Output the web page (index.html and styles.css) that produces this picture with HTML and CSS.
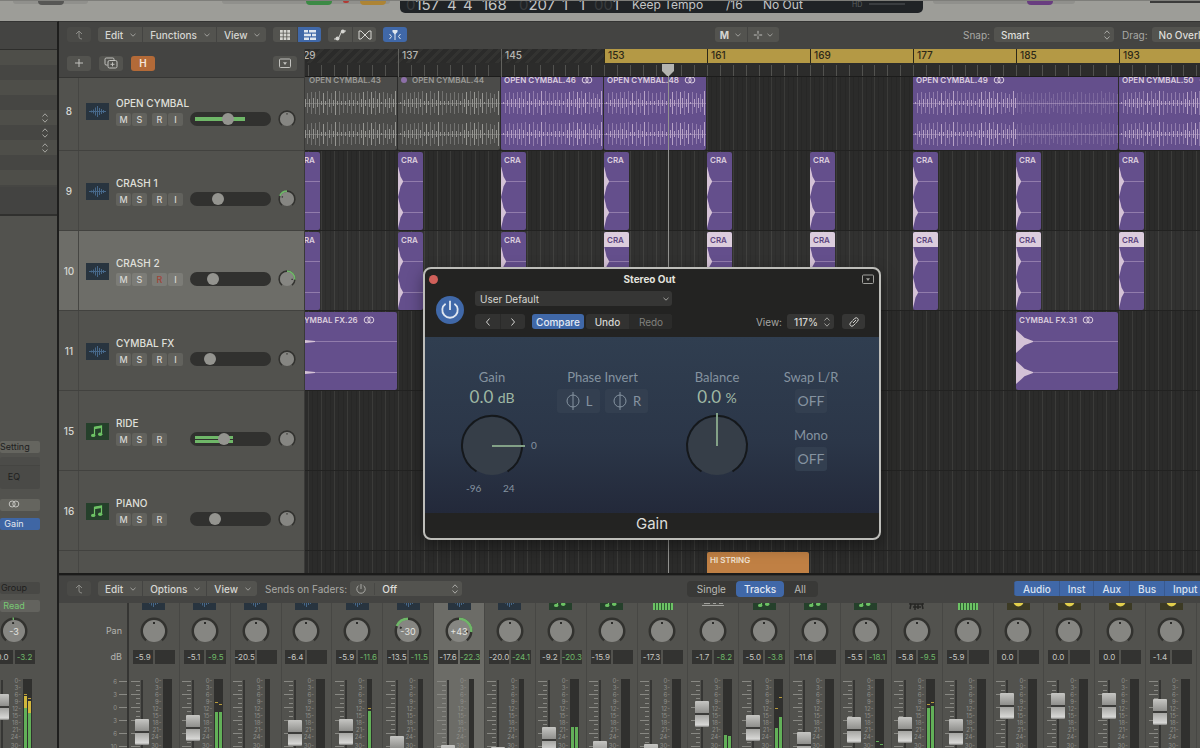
FILE: index.html
```html
<!DOCTYPE html>
<html lang="en">
<head>
    <meta charset="UTF-8">
    <meta name="viewport" content="width=device-width, initial-scale=1.0">
    <title>Tracks</title>
    <link rel="stylesheet" href="styles.css">
</head>
<body>
    <svg class="sprite" aria-hidden="true">
        <symbol id="i-chev" viewBox="0 0 8 8"><path d="M1.5 2.8 4 5.2 6.5 2.8"/></symbol>
        <symbol id="i-updown" viewBox="0 0 8 12"><path d="M1.5 4.5 4 1.8 6.5 4.5M1.5 7.5 4 10.2 6.5 7.5"/></symbol>
        <symbol id="i-up" viewBox="0 0 12 12"><path d="M3 5 6 2 9 5M6 2v6q0 2 3 2"/></symbol>
        <symbol id="i-plus" viewBox="0 0 12 12"><path d="M6 2v8M2 6h8"/></symbol>
        <symbol id="i-dup" viewBox="0 0 14 12"><path d="M3.5 8H2.2Q1 8 1 6.8V2.2Q1 1 2.2 1h6.6Q10 1 10 2.2V3"/><rect x="4" y="3.5" width="9" height="7.5" rx="1.5"/><path d="M8.5 5.3v4M6.5 7.3h4"/></symbol>
        <symbol id="i-box" viewBox="0 0 14 12"><rect x="1.5" y="2" width="11" height="8.5" rx="1"/><path class="fill" d="M5 5.2h4L7 8z"/></symbol>
        <symbol id="i-grid" viewBox="0 0 12 12"><path class="fill" d="M1 1h2.8v2.8H1zM4.6 1h2.8v2.8H4.6zM8.2 1H11v2.8H8.2zM1 4.6h2.8v2.8H1zM4.6 4.6h2.8v2.8H4.6zM8.2 4.6H11v2.8H8.2zM1 8.2h2.8V11H1zM4.6 8.2h2.8V11H4.6zM8.2 8.2H11V11H8.2z"/></symbol>
        <symbol id="i-regions" viewBox="0 0 12 12"><path class="fill" d="M0 1h4v2.6H0zM5 1h7v2.6H5zM0 4.7h7v2.6H0zM8 4.7h4v2.6H8zM0 8.4h5V11H0zM6 8.4h6V11H6z"/></symbol>
        <symbol id="i-auto" viewBox="0 0 14 12"><path d="M1 10h2.5Q6 10 7 6t3.500-4H13"/><circle class="fill" cx="4.500" cy="9.500" r="2"/><circle class="fill" cx="9.800" cy="2.500" r="2"/></symbol>
        <symbol id="i-flex" viewBox="0 0 14 12"><path d="M1 2v8h2L11 2h2v8h-2L3 2z"/></symbol>
        <symbol id="i-catch" viewBox="0 0 14 12"><path d="M7 4v7M1.500 5 3.500 7.500 1.500 10M12.500 5 10.500 7.500 12.500 10"/><path class="fill" d="M4.500 1h5v2L7 5.500 4.500 3z"/></symbol>
        <symbol id="i-cross" viewBox="0 0 12 12"><path d="M6 1v3.500M6 7.500V11M1 6h3.500M7.500 6H11M6 5.500v1"/></symbol>
        <symbol id="i-power" viewBox="0 0 12 12"><path d="M6 1v5M3.600 2.600a4.200 4.200 0 1 0 4.800 0"/></symbol>
        <symbol id="i-left" viewBox="0 0 8 10"><path d="M5.500 1.500 2.500 5l3 3.500"/></symbol>
        <symbol id="i-right" viewBox="0 0 8 10"><path d="M2.500 1.500 5.500 5l-3 3.500"/></symbol>
        <symbol id="i-link" viewBox="0 0 12 12"><path d="m5 7 3-3M4.500 4.800 2.300 7a2 2 0 0 0 2.800 2.800l2.200-2.200M4.800 4.400 7 2.200a2 2 0 0 1 2.800 2.800L7.600 7.200"/></symbol>
        <symbol id="i-phase" viewBox="0 0 16 18"><circle cx="8" cy="9" r="6"/><path d="M8 0v18"/></symbol>
        <symbol id="i-stereo" viewBox="0 0 12 8"><circle cx="4.200" cy="4" r="3"/><circle cx="7.800" cy="4" r="3"/></symbol>
        <symbol id="i-audio" viewBox="0 0 23 17"><rect class="bg-audio" width="23" height="17"/><path class="wave" d="M3 8.500h17M5.500 7.500v2M7.500 6.500v4M9.500 4.500v8M11.500 3v11M13.500 5v7M15.500 6v5M17.500 7v3"/></symbol>
        <symbol id="i-midi" viewBox="0 0 23 17"><rect class="bg-midi" width="23" height="17"/><path class="note" d="M8.500 12V4.200l7-1.200v7.800"/><path class="note-fill" d="M8.500 4 15.500 2.800V5L8.500 6.200z"/><ellipse class="note-fill" cx="7.200" cy="12.400" rx="2.200" ry="1.700"/><ellipse class="note-fill" cx="14.200" cy="11.200" rx="2.200" ry="1.700"/></symbol>
        <symbol id="i-keys" viewBox="0 0 23 17"><rect class="note-fill" x="2" y="8" width="20" height="9"/><path class="key-gap" d="M4.500 8v9M7.500 8v9M10.500 8v9M13.500 8v9M16.500 8v9M19.500 8v9"/></symbol>
        <symbol id="i-drum" viewBox="0 0 23 17"><path class="kit" d="M5 8h13v3H5zM6 11l-1 5M10 11v6M13 11v5M17 11l1 5M8 14h8"/></symbol>
        <symbol id="i-synth" viewBox="0 0 23 17"><path class="synth" d="M0 12.500h22M2 10.500h6M11 10.500h3M17 10.500h4"/></symbol>
        <symbol id="i-aux" viewBox="0 0 23 17"><rect class="bg-aux" width="23" height="17"/><circle class="sun" cx="11.500" cy="8.500" r="5"/></symbol>
    </svg>

    <header class="control-bar">
        <div class="bar-group transport"><i class="chip gray"></i></div>
        <div class="bar-group modes"><i class="chip green"></i><i class="dot red"></i><i class="chip gold"></i></div>
        <div class="lcd">
            <span><i>0</i>157</span><span>4</span><span>4</span><span>168</span>
            <span><i>0</i>207</span><span>1</span><span>1</span><span><i>00</i>1</span>
            <span class="small">Keep Tempo</span><span class="small">/16</span><span class="small">No Out</span>
            <span class="tiny">HD</span><span class="lcd-meter"></span>
        </div>
        <div class="bar-group tools"><i class="chip purple"></i></div>
        <div class="bar-edge"></div>
    </header>

    <div class="workspace">
        <aside class="inspector">
            <div class="inspector-head"></div>
            <div class="params">
                <svg><use href="#i-updown"/></svg>
                <svg><use href="#i-updown"/></svg>
                <svg><use href="#i-updown"/></svg>
            </div>
            <div class="inspector-gap"></div>
            <div class="slots">
                <button class="slot">Setting</button>
                <button class="slot eq">EQ</button>
                <button class="slot" aria-label="Stereo"><svg><use href="#i-stereo"/></svg></button>
                <button class="slot active">Gain</button>
                <button class="slot group">Group</button>
                <button class="slot read">Read</button>
            </div>
            <div class="inspector-strip" id="masterStrip"></div>
        </aside>

        <main class="editor">
            <nav class="toolbar">
                <button class="btn dim" aria-label="Up"><svg><use href="#i-up"/></svg></button>
                <div class="seg menus">
                    <button>Edit<svg><use href="#i-chev"/></svg></button>
                    <button>Functions<svg><use href="#i-chev"/></svg></button>
                    <button>View<svg><use href="#i-chev"/></svg></button>
                </div>
                <div class="seg icons">
                    <button aria-label="Grid"><svg><use href="#i-grid"/></svg></button>
                    <button class="on" aria-label="Regions"><svg><use href="#i-regions"/></svg></button>
                </div>
                <div class="seg icons">
                    <button aria-label="Automation"><svg><use href="#i-auto"/></svg></button>
                    <button aria-label="Flex"><svg><use href="#i-flex"/></svg></button>
                </div>
                <button class="btn on" aria-label="Catch playhead"><svg><use href="#i-catch"/></svg></button>
                <div class="space-wide"></div>
                <div class="seg tool-menus">
                    <button><b>M</b><svg><use href="#i-chev"/></svg></button>
                    <button aria-label="Marquee tool"><svg><use href="#i-cross"/></svg><svg><use href="#i-chev"/></svg></button>
                </div>
                <div class="space"></div>
                <div class="snap">
                    <label for="snap">Snap:</label>
                    <span class="picker"><select id="snap"><option>Smart</option></select><svg><use href="#i-updown"/></svg></span>
                    <label for="drag">Drag:</label>
                    <span class="picker"><select id="drag"><option>No Overlap</option></select></span>
                </div>
            </nav>

            <section class="arrange">
                <div class="headers">
                    <div class="head-tools">
                        <button class="btn" aria-label="Add track"><svg><use href="#i-plus"/></svg></button>
                        <button class="btn" aria-label="Duplicate track"><svg><use href="#i-dup"/></svg></button>
                        <button class="btn hide">H</button>
                        <button class="btn last" aria-label="Track options"><svg><use href="#i-box"/></svg></button>
                    </div>
                    <div class="track-list" id="trackList"></div>
                </div>
                <div class="timeline" id="timeline">
                    <div class="ruler" id="ruler"></div>
                    <div class="lanes" id="lanes"></div>
                    <svg class="playhead" id="playhead"><path class="line" d="M6.500 8v600"/><path class="head" d="M0 0h12v7l-5 5H5L0 7z"/></svg>
                </div>
            </section>

            <section class="mixer">
                <nav class="toolbar">
                    <button class="btn dim" aria-label="Up"><svg><use href="#i-up"/></svg></button>
                    <div class="seg menus">
                        <button>Edit<svg><use href="#i-chev"/></svg></button>
                        <button>Options<svg><use href="#i-chev"/></svg></button>
                        <button>View<svg><use href="#i-chev"/></svg></button>
                    </div>
                    <label for="sends">Sends on Faders:</label>
                    <span class="picker sends"><button aria-label="Sends on"><svg><use href="#i-power"/></svg></button><select id="sends"><option>Off</option></select><svg><use href="#i-updown"/></svg></span>
                    <div class="space-before"></div>
                    <div class="filter">
                        <button>Single</button><button class="on">Tracks</button><button>All</button>
                    </div>
                    <div class="space-after"></div>
                    <div class="types">
                        <button>Audio</button><button>Inst</button><button>Aux</button><button>Bus</button><button>Input</button>
                    </div>
                </nav>
                <div class="console">
                    <div class="console-labels">
                        <span class="pan-label">Pan</span>
                        <span class="db-label">dB</span>
                        <ul class="db-scale" id="dbScale"></ul>
                    </div>
                    <div class="strips" id="strips"></div>
                </div>
            </section>
        </main>
    </div>

    <div class="plugin" role="dialog" aria-label="Stereo Out">
        <div class="plugin-title">
            <button class="close" aria-label="Close"></button>
            <h2>Stereo Out</h2>
            <svg><use href="#i-box"/></svg>
        </div>
        <div class="plugin-bar">
            <button class="power" aria-label="Bypass"><svg><use href="#i-power"/></svg></button>
            <div class="plugin-rows">
                <span class="preset"><select aria-label="Preset"><option>User Default</option></select><svg><use href="#i-chev"/></svg></span>
                <div class="plugin-row">
                    <div class="seg pager">
                        <button aria-label="Previous"><svg><use href="#i-left"/></svg></button>
                        <button aria-label="Next"><svg><use href="#i-right"/></svg></button>
                    </div>
                    <button class="pbtn on">Compare</button>
                    <div class="seg undo"><button>Undo</button><button disabled>Redo</button></div>
                    <div class="space"></div>
                    <label for="zoom">View:</label>
                    <span class="zoom"><select id="zoom"><option>117%</option></select><svg><use href="#i-updown"/></svg></span>
                    <button class="pbtn link" aria-label="Link"><svg><use href="#i-link"/></svg></button>
                </div>
            </div>
        </div>
        <div class="face">
            <div class="param">
                <label for="gain">Gain</label>
                <output>0.0 <small>dB</small></output>
                <div class="dial">
                    <svg viewBox="0 0 92 88">
                        <circle class="dial-cap" cx="46" cy="38" r="29"/>
                        <path class="dial-ring" d="M30.500 63.500a30 30 0 1 1 31 0"/>
                        <path class="dial-hand" d="M46 38h33"/>
                        <text x="85" y="41">0</text><text x="20" y="84">-96</text><text x="57" y="84">24</text>
                    </svg>
                    <input id="gain" type="range" min="-96" max="24" value="0">
                </div>
            </div>
            <div class="param">
                <span>Phase Invert</span>
                <div class="phase">
                    <button><svg><use href="#i-phase"/></svg>L</button>
                    <button><svg><use href="#i-phase"/></svg>R</button>
                </div>
            </div>
            <div class="param">
                <label for="balance">Balance</label>
                <output>0.0 <small>%</small></output>
                <div class="dial">
                    <svg viewBox="0 0 92 88">
                        <circle class="dial-cap" cx="46" cy="38" r="29"/>
                        <path class="dial-ring" d="M30.500 63.500a30 30 0 1 1 31 0"/>
                        <path class="dial-hand" d="M46 38V5"/>
                    </svg>
                    <input id="balance" type="range" min="-100" max="100" value="0">
                </div>
            </div>
            <div class="param">
                <span>Swap L/R</span>
                <button class="toggle">OFF</button>
                <span class="mono">Mono</span>
                <button class="toggle">OFF</button>
            </div>
        </div>
        <div class="plugin-foot">Gain</div>
    </div>

    <script src="app.js"></script>
</body>
</html>
```
FILE: styles.css
```css
* {
    box-sizing: border-box;
}

body {
    margin: 0;
    height: 100vh;
    display: flex;
    flex-direction: column;
    overflow: hidden;
    background: #2b2b2a;
    color: #d6d6d2;
    font-family: Inter, 'Liberation Sans', sans-serif;
    font-size: 10px;
}

button, select, input {
    margin: 0;
    padding: 0;
    border: 0;
    font: inherit;
    color: inherit;
    background: none;
    appearance: none;
}

svg {
    fill: none;
    stroke: currentColor;
    stroke-width: 1;
    flex: none;
}

.fill {
    fill: currentColor;
    stroke: none;
}

.sprite {
    position: absolute;
    width: 0;
    height: 0;
}

/* control bar */
.control-bar {
    flex: none;
    display: flex;
    align-items: flex-start;
    height: 21px;
    background: #9d9d98;
    border-top: 1px solid #7e7e7a;
    overflow: hidden;
}

.bar-group {
    display: flex;
    height: 3px;
    background: #90908c;
    border-radius: 0 0 5px 5px;
}

.transport {
    margin-left: 13px;
    width: 75px;
    padding-left: 25px;
}

.modes {
    width: 168px;
    margin-left: 134px;
    padding-left: 84px;
    gap: 11px;
}

.chip {
    width: 26px;
    height: 4px;
    border-radius: 0 0 5px 5px;
}

.gray { background: #575755; }
.green { background: #3c8a45; }
.gold { background: #ad8435; }
.purple { background: #693d80; }

.dot {
    width: 6px;
    height: 2px;
    border-radius: 0 0 3px 3px;
}

.red { background: #b13a35; }

.lcd {
    margin-left: 10px;
    flex: 0 0 523px;
    height: 12px;
    padding-left: 6px;
    background: #202326;
    border-radius: 0 0 5px 5px;
    display: grid;
    grid-template-columns: 41px 16px 19px 37px 43px 17px 15px 38px 94px 37px 89px 17px 36px;
    line-height: 7px;
    align-items: start;
    font-size: 15px;
    color: #c4c6c6;
    white-space: nowrap;
}

.lcd i {
    font-style: normal;
    color: #393c3e;
}

.lcd .small {
    font-size: 12px;
}

.lcd .tiny {
    font-size: 7px;
    color: #5d6062;
}

.lcd .lcd-meter {
    height: 2px;
    margin-top: 2px;
    background: #3a3d40;
}

.tools {
    margin-left: 10px;
    width: 142px;
    padding-left: 94px;
}

.bar-edge {
    margin-left: auto;
    width: 50px;
    height: 2px;
    background: #3c3c3b;
}

/* inspector */
.workspace {
    flex: 1;
    min-height: 0;
    display: flex;
}

.inspector {
    flex: none;
    width: 59px;
    border-right: 2px solid #1e1e1d;
    border-top: 1px solid #343433;
    background: #52524e;
    overflow: hidden;
    display: flex;
    flex-direction: column;
}

.inspector-head {
    height: 28px;
    background: #444442;
    border-bottom: 1px solid #2e2e2c;
}

.params {
    height: 137px;
    padding: 62px 7px 0 0;
    display: flex;
    flex-direction: column;
    align-items: flex-end;
    gap: 3px;
    background: repeating-linear-gradient(#4e4e49 0 15px, #464643 15px 30px);
}

.params svg {
    width: 10px;
    height: 12px;
    color: #a5a5a0;
}

.inspector-gap {
    height: 29px;
    background: #434341;
    border-bottom: 2px solid #30302e;
}

.slots {
    flex: 1;
    padding-right: 17px;
    display: flex;
    flex-direction: column;
    justify-content: flex-end;
}

.slot {
    height: 12px;
    border-radius: 2px;
    background: #65655f;
    color: #20201e;
    font-size: 9px;
    line-height: 12px;
    text-align: center;
    padding-right: 12px;
}

.slot svg {
    width: 12px;
    height: 8px;
    color: #c4c4c0;
}

.slot.eq {
    height: 32px;
    padding-top: 8px;
    margin: 4px 0 10px;
    background: linear-gradient(#4c4c49 8px, #454542 8px 9px, #4a4a47 9px);
}

.slot.active {
    margin: 7px 0 52px;
    background: #3f66a4;
    color: #e4e8ee;
}

.slot.group {
    background: #484845;
    margin-bottom: 6px;
}

.slot.read {
    background: #63635e;
    color: #78c874;
}

.inspector-strip {
    width: 51px;
    height: 136px;
    margin-left: -12px;
}

/* toolbars */
.editor {
    flex: 1;
    min-width: 0;
    display: flex;
    flex-direction: column;
}

.toolbar {
    flex: none;
    display: flex;
    align-items: center;
    height: 28px;
    padding: 0 0 2px 8px;
    background: #444442;
    border-top: 1px solid #343433;
    overflow: hidden;
    white-space: nowrap;
}

.toolbar label {
    color: #a9a9a5;
}

.space { flex: 3; }
.space-wide { flex: 5; }
.space-before { flex: 9; }
.space-after { flex: 8; }

.btn, .seg {
    height: 15px;
    border-radius: 3px;
    background: #53534f;
}

.btn {
    width: 24px;
    display: flex;
    align-items: center;
    justify-content: center;
    color: #c2c2be;
}

.btn svg, .icons svg {
    width: 14px;
    height: 12px;
}

.btn.dim {
    background: #4a4a47;
    color: #8b8b87;
}

.btn.on, .seg .on {
    background: #4068a8;
    color: #dfe6f0;
}

.seg {
    display: flex;
    overflow: hidden;
}

.seg button {
    display: flex;
    align-items: center;
    justify-content: space-between;
    border-left: 1px solid #444442;
}

.seg button:first-child {
    border-left: 0;
}

.menus {
    margin-left: 7px;
}

.menus button {
    padding: 0 5px 0 7px;
    gap: 6px;
    font-weight: 500;
}

.menus svg, .tool-menus svg:last-child {
    width: 8px;
    height: 8px;
    color: #a0a09c;
}

.icons {
    margin-left: 7px;
}

.icons button {
    width: 24px;
    justify-content: center;
    color: #d6d6d2;
}

.toolbar > .btn.on {
    margin-left: 7px;
}

.tool-menus button {
    width: 32px;
    padding: 0 5px;
}

.tool-menus svg:first-child {
    width: 10px;
    height: 10px;
}

.snap {
    flex: 0 0 237px;
    display: flex;
    align-items: center;
    gap: 4px;
    overflow: hidden;
}

.picker {
    flex: none;
    width: 120px;
    height: 15px;
    margin-right: 4px;
    padding: 0 3px 0 7px;
    display: flex;
    align-items: center;
    border-radius: 3px;
    background: #53534f;
}

.picker select {
    flex: 1;
    color: #dededa;
    font-weight: 500;
}

.picker svg {
    width: 8px;
    height: 12px;
    color: #aaaaa6;
}

.sends {
    width: 112px;
    padding-left: 5px;
}

.sends button {
    display: flex;
    padding-right: 7px;
    border-right: 1px solid #484845;
    margin-right: 7px;
}

.sends button svg {
    width: 12px;
}

.mixer .toolbar > label {
    margin: 0 3px 0 8px;
}

/* arrange area */
.arrange {
    flex: 1;
    min-height: 0;
    display: flex;
    overflow: hidden;
}

.headers {
    flex: none;
    width: 246px;
    display: flex;
    flex-direction: column;
    background: #52524e;
    border-right: 1px solid #3a3a38;
}

.head-tools {
    flex: none;
    height: 29px;
    padding: 0 7px 0 8px;
    display: flex;
    align-items: center;
    gap: 8px;
    background: #444442;
    border-bottom: 1px solid #363634;
}

.btn.hide {
    background: #b36a38;
    color: #f4e6da;
    font-weight: 600;
}

.btn.last {
    margin-left: auto;
}

.track-list, .lanes {
    flex: 1;
    min-height: 0;
    display: flex;
    flex-direction: column;
    justify-content: flex-start;
    overflow: hidden;
}

/* first row is scrolled a little under the ruler */
.track-list > :first-child {
    margin-top: -7px;
}

.track {
    flex: none;
    height: 80px;
    padding: 24px 8px 0 0;
    display: grid;
    grid-template: 16px 16px / 20px 23px 67px 1fr 18px;
    column-gap: 7px;
    align-items: center;
    border-bottom: 1px solid #42423f;
    background: linear-gradient(90deg, transparent 19px, #464643 19px 20px, transparent 20px);
}

.track.selected {
    background-color: #6d6d68;
}

.track-number {
    grid-row: 1 / 3;
    text-align: center;
    font-weight: 500;
}

.track > svg {
    grid-row: 1 / 3;
    width: 23px;
    height: 17px;
}

.track-name {
    grid-column: 3 / 6;
    color: #e0e0dc;
    font-weight: 500;
}

.track-buttons {
    grid-column: 3;
    display: flex;
    gap: 1px;
}

.track-buttons button {
    width: 15px;
    height: 13px;
    border-radius: 2px;
    background: #62625d;
    font-size: 9px;
    font-weight: 500;
    line-height: 13px;
}

.track.selected .track-buttons button {
    background: #7c7c77;
}

.track-buttons button:nth-child(3) {
    margin-left: 4px;
}

.track.selected .track-buttons .armed {
    color: #a04438;
}

.volume {
    display: grid;
    height: 14px;
    border-radius: 7px;
    background: #31312f;
    align-items: center;
}

.volume > * {
    grid-area: 1 / 1;
}

.level {
    height: 4px;
    margin-left: 5px;
    background: #6fb768;
}

.level.split {
    height: 7px;
    background: linear-gradient(#6fb768 3px, #31312f 3px 4px, #6fb768 4px);
}

.volume input {
    width: 100%;
    height: 14px;
}

.volume input::-webkit-slider-thumb {
    appearance: none;
    width: 12px;
    height: 12px;
    border-radius: 50%;
    background: #94948f;
}

.bg-audio { fill: #28343f; stroke: none; }
.bg-midi { fill: #25402b; stroke: none; }
.bg-aux { fill: #3c3a24; stroke: none; }
.wave { stroke: #47688a; }
.note { stroke: #72c868; stroke-width: 1.2; }
.note-fill { fill: #6cc264; stroke: none; }
.key-gap { stroke: #2f5c33; }
.kit { stroke: #262624; stroke-width: 1.5; }
.synth { stroke: #a0a09c; }
.sun { fill: #e2cf4c; stroke: none; }

/* timeline */
.timeline {
    flex: 1;
    min-width: 0;
    display: flex;
    flex-direction: column;
    position: relative;
    overflow: hidden;
    background: #2b2b2a;
}

.ruler {
    flex: none;
    height: 28px;
    position: relative;
    background: repeating-linear-gradient(135deg, #2b2b2a 0 4px, #333331 4px 7px);
    border-bottom: 1px solid #1c1c1b;
}

.ruler svg {
    position: absolute;
    inset: 14px 0 0;
    width: 100%;
    height: 13px;
    background: #2c2c2b;
    stroke: #52524f;
}

.cycle {
    position: absolute;
    top: 0;
    right: 0;
    height: 14px;
    background: #b49945;
}

.bar-number {
    position: absolute;
    top: 0;
    height: 28px;
    padding-left: 3px;
    border-left: 1px solid #62625e;
    line-height: 12px;
    color: #b6b6b2;
    font-weight: 500;
}

.bar-number.in-cycle {
    height: 14px;
    border-color: #2c2818;
    color: #2c2818;
}

.lanes {
    position: relative;
}

.lane-grid {
    position: absolute;
    inset: 0;
    width: 100%;
    height: 100%;
}

.lane-grid .beat { stroke: #272726; }
.lane-grid .bar { stroke: #3b3b39; }

.lane {
    flex: none;
    height: 80px;
    position: relative;
    border-bottom: 1px solid #222221;
}

.lane.first {
    margin-top: -6px;
}

.lane.selected {
    background: rgba(255, 255, 255, 0.03);
}

.region {
    position: absolute;
    top: 1px;
    bottom: 0;
    border-radius: 2px;
    background: #644f8c;
    overflow: hidden;
    color: #dccede;
}

.region h3 {
    margin: 0;
    height: 15px;
    padding-left: 3px;
    display: flex;
    align-items: center;
    gap: 5px;
    font-size: 8px;
    font-weight: 600;
    white-space: nowrap;
}

.region h3 svg {
    width: 12px;
    height: 8px;
}

.region .tag {
    width: 6px;
    height: 6px;
    border-radius: 50%;
    background: #8c6fa8;
}

.region .waves {
    display: block;
    height: 64px;
    stroke: #b7a2c6;
}

.region .waves .decay {
    fill: #d4c2d6;
    stroke: none;
}

.region .waves .soft {
    opacity: 0.55;
}

.region .waves .looped {
    opacity: 0.3;
}

.region.muted {
    background: #4b4b49;
    color: #9a9a96;
    font-weight: 500;
}

.region.muted .waves {
    stroke: #969692;
}

.region.picked h3 {
    background: #dccddd;
    color: #5c467f;
}

.region.orange {
    background: #c08044;
    color: #efe0d0;
}

.playhead {
    position: absolute;
    top: 15px;
    left: 357px;
    width: 12px;
    height: 100%;
}

.playhead .line { stroke: #92928f; }
.playhead .head { fill: #b4b4b0; stroke: none; }

/* mixer */
.mixer {
    flex: none;
    height: 175px;
    display: flex;
    flex-direction: column;
    border-top: 2px solid #1b1b1a;
    background: #52524e;
    overflow: hidden;
}

.filter {
    display: flex;
    border-radius: 4px;
    background: #393937;
}

.filter button {
    height: 16px;
    padding: 0 10px;
    border-radius: 4px;
    color: #b9b9b5;
}

.filter button:last-child {
    padding-right: 12px;
}

.filter .on {
    padding: 0 8px;
    background: #4068a8;
    color: #e4eaf4;
    font-weight: 500;
}

.types {
    flex: 0 0 186px;
    display: flex;
    overflow: hidden;
    border-radius: 3px 0 0 3px;
    background: #4068a8;
}

.types button {
    height: 15px;
    padding: 0 8px;
    border-left: 1px solid #38598f;
    color: #dbe3f0;
    font-weight: 500;
}

.console {
    flex: 1;
    min-height: 0;
    display: flex;
    overflow: hidden;
}

.console-labels {
    flex: none;
    width: 70px;
    border-right: 2px solid #353533;
    display: flex;
    flex-direction: column;
    text-align: right;
    font-size: 9px;
    color: #b4b4b0;
}

.console-labels span {
    padding-right: 5px;
    line-height: 12px;
}

.pan-label { margin-top: 22px; }
.db-label { margin-top: 14px; }

.db-scale {
    margin: 12px 0 0;
    padding: 0;
    list-style: none;
    font-size: 6px;
    color: #94948f;
}

.db-scale li {
    height: 13px;
    display: flex;
    align-items: center;
    justify-content: flex-end;
    gap: 2px;
}

.db-scale li::after {
    content: '';
    width: 8px;
    height: 1px;
    background: #8a8a85;
}

.strips {
    flex: 1;
    min-width: 0;
    padding-right: 3px;
    display: grid;
    grid-template-columns: repeat(21, minmax(0, 1fr));
}

.strip {
    height: 100%;
    border-right: 1px solid #474744;
    overflow: hidden;
    display: flex;
    flex-direction: column;
    align-items: center;
}

.strip > * {
    flex: none;
}

.strip.selected {
    background: #6c6c67;
}

.strip-icon {
    height: 7px;
    overflow: hidden;
    display: flex;
    align-items: flex-end;
}

.strip-icon svg {
    width: 23px;
    height: 17px;
}

.inspector-strip .strip {
    border: 0;
}

.inspector-strip .strip-icon {
    height: 0;
}

.inspector-strip .knob {
    margin-top: 5px;
}

.knob {
    position: relative;
    display: block;
    width: 28px;
    height: 28px;
    margin-top: 7px;
}

.track .knob {
    width: 18px;
    height: 18px;
    margin: 0;
}

.knob svg {
    display: block;
    width: 100%;
    height: 100%;
}

.knob input, .dial input {
    position: absolute;
    inset: 0;
    width: 100%;
    height: 100%;
    opacity: 0;
}

.knob .ring { stroke: #32322f; stroke-width: 3; }
.knob .arc { stroke: #6fb768; stroke-width: 3; }
.knob .cap { fill: #868682; stroke: none; }
.knob .mark { stroke: #2c2c2a; stroke-width: 2; }
.knob text { fill: #e4e4e0; stroke: none; font-size: 9px; text-anchor: middle; }

.readouts {
    display: flex;
    gap: 2px;
    margin-top: 5px;
}

.readouts span {
    width: 20px;
    height: 14px;
    background: #333331;
    font-size: 8px;
    line-height: 14px;
    text-align: center;
    color: #c6c6c2;
    white-space: nowrap;
}

.readouts .peak {
    color: #6fb768;
}

.fader-area {
    display: flex;
    align-items: flex-start;
    margin-top: 13px;
    width: 45px;
}

.fader {
    display: grid;
    width: 18px;
}

.fader > * {
    grid-area: 1 / 1;
}

.fader svg {
    width: 12px;
    height: 126px;
    stroke: #888883;
}

.fader .slot-line {
    stroke: #363634;
    stroke-width: 2;
}

.fader input {
    writing-mode: vertical-lr;
    direction: rtl;
    justify-self: end;
    width: 14px;
    height: 126px;
}

.fader input::-webkit-slider-thumb {
    appearance: none;
    width: 14px;
    height: 26px;
    border-radius: 1px;
    background: linear-gradient(#c6c6c3, #8f8f8c 12px, #3c3c3a 12px 14px, #a5a5a2 14px, #d8d8d6 24px, #80807d);
}

.meter-scale {
    width: 12px;
    margin: 0;
    padding: 0;
    list-style: none;
    font-size: 6px;
    line-height: 7px;
    text-align: right;
    color: #8e8e89;
}

.meter-scale li:last-child {
    margin-top: 2px;
}

.meter {
    width: 9px;
    height: 90px;
    margin: 2px 0 0 2px;
    padding: 0 1px;
    display: flex;
    justify-content: space-between;
    background: #30302e;
}

.meter.single {
    width: 5px;
}

.meter svg {
    width: 3px;
    height: 90px;
    stroke: none;
}

/* plug-in window */
.plugin {
    position: absolute;
    top: 267px;
    left: 423px;
    width: 458px;
    border: 2px solid #bdbdb9;
    border-radius: 8px;
    background: #232322;
    overflow: hidden;
    box-shadow: 0 6px 16px rgba(0, 0, 0, 0.4);
}

.plugin-title {
    display: flex;
    align-items: center;
    height: 20px;
    padding: 0 4px;
}

.plugin-title h2 {
    flex: 1;
    margin: 0;
    text-align: center;
    font-size: 10px;
    font-weight: 700;
    color: #e2e2de;
}

.plugin-title svg {
    width: 14px;
    height: 12px;
    color: #a0a09c;
}

.close {
    width: 9px;
    height: 9px;
    border-radius: 50%;
    background: #d0605a;
}

.plugin-bar {
    display: flex;
    gap: 11px;
    height: 48px;
    padding: 0 14px 0 11px;
}

.power {
    width: 28px;
    height: 28px;
    margin-top: 7px;
    border-radius: 50%;
    background: #4068a8;
    color: #dfe6f0;
    display: grid;
    place-items: center;
}

.power svg {
    width: 22px;
    height: 22px;
}

.plugin-rows {
    flex: 1;
    padding-top: 2px;
}

.preset {
    display: flex;
    align-items: center;
    width: 197px;
    height: 15px;
    padding: 0 2px 0 5px;
    border-radius: 3px;
    background: #363635;
}

.preset select {
    flex: 1;
}

.preset svg {
    width: 8px;
    height: 8px;
    color: #a0a09c;
}

.plugin-row {
    display: flex;
    align-items: center;
    margin-top: 8px;
}

.plugin-row label {
    margin-right: 5px;
    color: #a6a6a2;
}

.pager, .undo {
    background: #323231;
}

.plugin-row .seg button {
    border-color: #2a2a29;
    justify-content: center;
}

.pager button {
    width: 25px;
}

.pager svg {
    width: 8px;
    height: 10px;
}

.undo button {
    width: 43px;
    font-weight: 500;
}

.undo button:disabled {
    background: #2b2b2a;
    color: #80807c;
    font-weight: 400;
}

.pbtn {
    height: 15px;
    border-radius: 3px;
    background: #363635;
}

.pbtn.on {
    width: 52px;
    margin: 0 2px 0 7px;
    background: #4068a8;
    color: #e4eaf4;
    font-weight: 500;
}

.pbtn.link {
    width: 23px;
    margin-left: 8px;
    display: grid;
    place-items: center;
}

.pbtn.link svg {
    width: 12px;
    height: 12px;
}

.zoom {
    display: flex;
    align-items: center;
    width: 47px;
    height: 15px;
    padding: 0 3px 0 7px;
    border-radius: 3px;
    background: #363635;
    font-weight: 500;
}

.zoom select {
    flex: 1;
    min-width: 0;
}

.zoom svg {
    width: 8px;
    height: 12px;
    color: #a0a09c;
}

.face {
    display: grid;
    grid-template-columns: 92fr 129fr 100fr 88fr;
    height: 176px;
    padding: 30px 24px 0 21px;
    background: linear-gradient(#303e50, #2b3648 60%, #23293a);
    color: #8593a0;
    font-family: Lato, 'Open Sans', sans-serif;
    font-size: 13px;
}

.param {
    display: flex;
    flex-direction: column;
    align-items: center;
    line-height: 20px;
}

.param output {
    font-size: 17px;
    color: #9fb8a4;
}

.param small {
    font-size: 14px;
}

.dial {
    position: relative;
    width: 92px;
    height: 88px;
}

.dial svg {
    display: block;
    width: 92px;
    height: 88px;
}

.dial-cap { fill: #363e48; stroke: none; }
.dial-ring { stroke: #15181b; stroke-width: 2; }
.dial-hand { stroke: #83a187; stroke-width: 2; }

.dial text {
    fill: #8593a0;
    stroke: none;
    font-size: 10px;
}

.phase {
    display: flex;
    gap: 5px;
    margin-top: 2px;
}

.phase button {
    display: flex;
    align-items: center;
    justify-content: center;
    gap: 5px;
    width: 43px;
    height: 24px;
    border-radius: 3px;
    background: #333f50;
}

.phase svg {
    width: 16px;
    height: 18px;
}

.toggle {
    width: 32px;
    height: 24px;
    margin-top: 2px;
    border-radius: 3px;
    background: #333f50;
    font-size: 14px;
}

.mono {
    margin-top: 12px;
}

.plugin-foot {
    height: 25px;
    line-height: 22px;
    text-align: center;
    font-size: 15px;
    color: #dededa;
}
```
FILE: app.js
```js
const FIRST_BAR = 129;
const BARS_PER_MARK = 8;
const MARK_WIDTH = 103;
const SCROLL = 10;

const barToX = bar => Math.round((bar - FIRST_BAR) * MARK_WIDTH / BARS_PER_MARK) - SCROLL;
const icon = name => `<svg><use href="#i-${name}"/></svg>`;

const crashes = picked => [129, 137, 145, 153, 161, 169, 177, 185, 193].map(bar => ({
    bar, length: 2, name: 'CRA', kind: 'crash', picked: picked && bar >= 153
}));

const tracks = [
    { no: 8, name: 'OPEN CYMBAL', type: 'audio', volume: 47, level: 50, pan: 0, regions: [
        { bar: 129, length: 8, name: 'OPEN CYMBAL.43', kind: 'hits', muted: true },
        { bar: 137, length: 8, name: 'OPEN CYMBAL.44', kind: 'hits', muted: true },
        { bar: 145, length: 8, name: 'OPEN CYMBAL.46', kind: 'hits', stereo: true },
        { bar: 153, length: 8, name: 'OPEN CYMBAL.48', kind: 'hits', stereo: true },
        { bar: 177, length: 16, name: 'OPEN CYMBAL.49', kind: 'hits', stereo: true },
        { bar: 193, length: 8, name: 'OPEN CYMBAL.50', kind: 'hits', stereo: true }
    ] },
    { no: 9, name: 'CRASH 1', type: 'audio', volume: 32, pan: -30, regions: crashes(false) },
    { no: 10, name: 'CRASH 2', type: 'audio', volume: 24, pan: 43, selected: true, regions: crashes(true) },
    { no: 11, name: 'CYMBAL FX', type: 'audio', volume: 21, pan: 0, regions: [
        { bar: 129, length: 8, name: 'CYMBAL FX.26', kind: 'thin', stereo: true },
        { bar: 185, length: 8, name: 'CYMBAL FX.31', kind: 'swell', stereo: true }
    ] },
    { no: 15, name: 'RIDE', type: 'midi', volume: 40, level: 38, pan: 0, regions: [] },
    { no: 16, name: 'PIANO', type: 'midi', volume: 27, pan: 0, regions: [] },
    { empty: true, regions: [{ bar: 161, length: 8, name: 'HI STRING', orange: true }] }
];

// cap: fader position, levels / peaks: distance from the top of the meter
const channels = [
    { icon: 'audio', db: '-5.9', cap: 42 },
    { icon: 'audio', db: '-5.1', peak: '-9.5', cap: 38, levels: [33, 33], peaks: [23, 25] },
    { icon: 'audio', db: '-20.5', cap: 80, single: true },
    { icon: 'audio', db: '-6.4', cap: 43 },
    { icon: 'audio', db: '-5.9', peak: '-11.6', cap: 42, single: true, levels: [32], peaks: [29] },
    { icon: 'audio', db: '-13.5', peak: '-11.5', cap: 59, single: true, pan: -30 },
    { icon: 'audio', db: '-17.6', peak: '-22.3', cap: 68, single: true, pan: 43, selected: true },
    { icon: 'audio', db: '-20.0', peak: '-24.1', cap: 70, single: true },
    { icon: 'midi', db: '-9.2', peak: '-20.3', cap: 50, levels: [48, 48] },
    { icon: 'midi', db: '-15.9', cap: 64 },
    { icon: 'keys', db: '-17.3', cap: 67 },
    { icon: 'synth', db: '-1.7', peak: '-8.2', cap: 24, levels: [56, 57] },
    { icon: 'midi', db: '-5.0', peak: '-3.8', cap: 38, levels: [49, 38], peaks: [29, 18] },
    { icon: 'midi', db: '-11.6', cap: 55 },
    { icon: 'midi', db: '-5.5', peak: '-18.1', cap: 40, peaks: [62, 65] },
    { icon: 'drum', db: '-5.8', peak: '-9.5', cap: 40, levels: [29, 27], peaks: [25, 23] },
    { icon: 'keys', db: '-5.9', cap: 42 },
    { icon: 'aux', db: '0.0', cap: 16 },
    { icon: 'aux', db: '0.0', cap: 16 },
    { icon: 'aux', db: '0.0', cap: 16 },
    { icon: 'aux', db: '-1.4', cap: 22 }
];

const master = { icon: 'audio', db: '0.0', peak: '-3.2', cap: 17, pan: -3, levels: [17, 22], peaks: [15, 19], hot: true };

function knob(pan, label, showValue) {
    const point = (deg, r) => {
        const a = (deg - 90) * Math.PI / 180;
        return `${(14 + r * Math.cos(a)).toFixed(1)} ${(14 + r * Math.sin(a)).toFixed(1)}`;
    };
    const angle = pan * 2.2;
    const arc = pan ? `<path class="arc" d="M${point(0, 12)}A12 12 0 0 ${pan > 0 ? 1 : 0} ${point(angle, 12)}"/>` : '';
    const text = pan && showValue ? `<text x="14" y="18">${pan > 0 ? '+' : ''}${pan}</text>` : '';
    return `<label class="knob">
        <svg viewBox="0 0 28 28">
            <path class="ring" d="M${point(-140, 12)}A12 12 0 1 1 ${point(140, 12)}"/>${arc}
            <circle class="cap" cx="14" cy="14" r="11"/>
            <path class="mark" d="M${point(angle, 9)}L${point(angle, 7)}"/>${text}
        </svg>
        <input type="range" min="-64" max="63" value="${pan}" aria-label="${label}">
    </label>`;
}

function hitsWave(width, loopAt) {
    let soft = '', loud = '', looped = '';
    let seed = 7;
    const rand = () => (seed = seed * 16807 % 2147483647) / 2147483647;
    for (let x = 2; x < width; x += 2) {
        const tall = x % 4 === 0;
        const small = Math.round(1 + rand() * 4);
        const h = tall ? Math.round(9 + rand() * 3) : small;
        const bright = rand() < 0.2;
        for (const cy of [16, 47]) {
            const bar = `M${x}.5 ${cy - h}v${h * 2}`;
            if (loopAt && x > loopAt) looped += bar;
            else if (tall && !bright) soft += bar;
            else loud += bar;
        }
    }
    return `<path class="soft" d="${soft}M0 16.500h${width}M0 47.500h${width}"/><path d="${loud}"/><path class="looped" d="${looped}"/>`;
}

function decayWave(width, reach, height) {
    return [14, 45].map(cy => `
        <path class="soft" d="M0 ${cy}.5h${width}"/>
        <path class="decay" d="M0 ${cy - height}l${reach * 0.3} ${height * 0.4} ${reach * 0.2} ${height * 0.3} ${reach * 0.5} ${height * 0.3}v1l-${reach * 0.5} ${height * 0.3}-${reach * 0.2} ${height * 0.3}-${reach * 0.3} ${height * 0.4}z"/>`).join('');
}

function renderRegion(region) {
    const left = barToX(region.bar);
    const width = barToX(region.bar + region.length) - left - 1;
    let wave = '';
    if (region.kind === 'hits') wave = hitsWave(width, region.length > 8 ? MARK_WIDTH : 0);
    if (region.kind === 'crash') wave = decayWave(width, 5, 15);
    if (region.kind === 'thin') wave = decayWave(width, 20, 3);
    if (region.kind === 'swell') wave = decayWave(width, 17, 11);
    const classes = ['region', region.muted && 'muted', region.picked && 'picked', region.orange && 'orange'].filter(Boolean).join(' ');
    return `<div class="${classes}" style="left: ${left}px; width: ${width}px">
        <h3>${region.muted ? '<i class="tag"></i>' : ''}${region.name}${region.stereo ? icon('stereo') : ''}</h3>
        ${wave ? `<svg class="waves" width="${width}">${wave}</svg>` : ''}
    </div>`;
}

function renderTrack(track) {
    if (track.empty) return '<div class="track"></div>';
    const buttons = track.type === 'audio' ? ['M', 'S', 'R', 'I'] : ['M', 'S', 'R'];
    const level = track.level
        ? `<div class="level${track.type === 'midi' ? ' split' : ''}" style="width: ${track.level}px"></div>` : '';
    return `<div class="track${track.selected ? ' selected' : ''}">
        <span class="track-number">${track.no}</span>
        ${icon(track.type)}
        <span class="track-name">${track.name}</span>
        <div class="track-buttons">${buttons.map(b => `<button${b === 'R' ? ' class="armed"' : ''}>${b}</button>`).join('')}</div>
        <div class="volume">${level}<input type="range" value="${track.volume}" aria-label="${track.name} volume"></div>
        ${knob(track.pan, track.name + ' pan', false)}
    </div>`;
}

function renderMeter(channel) {
    const count = channel.single ? 1 : 2;
    let out = '';
    for (let i = 0; i < count; i++) {
        const level = channel.levels ? channel.levels[i] : 90;
        const peak = channel.peaks ? channel.peaks[i] : null;
        out += `<svg><rect y="${level}" width="3" height="90" fill="#62b058"/>
            ${channel.hot ? `<rect y="${level}" width="3" height="12" fill="#d2b83c"/>` : ''}
            ${peak !== null ? `<rect y="${peak}" width="3" height="1" fill="${peak > 50 ? '#62b058' : '#b89c3c'}"/>` : ''}</svg>`;
    }
    return `<div class="meter${channel.single ? ' single' : ''}">${out}</div>`;
}

function renderStrip(channel) {
    let ticks = '';
    for (let i = 0; i < 20; i++) {
        const major = i % 3 === 0;
        ticks += `M${major ? 0 : 5} ${4 + Math.round(i * 13 / 3)}.5H9`;
    }
    return `<div class="strip${channel.selected ? ' selected' : ''}">
        <div class="strip-icon">${icon(channel.icon)}</div>
        ${knob(channel.pan || 0, 'Pan', true)}
        <div class="readouts"><span>${channel.db}</span><span class="peak">${channel.peak || ''}</span></div>
        <div class="fader-area">
            <div class="fader">
                <svg><path d="${ticks}"/><path class="slot-line" d="M11 3v123"/></svg>
                <input type="range" value="${100 - channel.cap}" aria-label="Volume">
            </div>
            <ul class="meter-scale">${[0, 3, 6, 9, 12, 15, 18, 21, 24, 30].map(n => `<li>${n}-</li>`).join('')}</ul>
            ${renderMeter(channel)}
        </div>
    </div>`;
}

function renderRuler() {
    let ticks = '', bars = '', beats = '', numbers = '';
    for (let bar = FIRST_BAR; bar < FIRST_BAR + 200; bar++) {
        const x = barToX(bar);
        ticks += `M${x}.5 2v11`;
        bars += `M${x}.5 0v800`;
        beats += `M${x + 4}.5 0v800M${x + 9}.5 0v800`;
        if ((bar - FIRST_BAR) % BARS_PER_MARK === 0) {
            numbers += `<span class="bar-number${bar >= 153 ? ' in-cycle' : ''}" style="left: ${x}px">${bar}</span>`;
        }
    }
    document.getElementById('ruler').innerHTML =
        `<svg><path d="${ticks}"/></svg><div class="cycle" style="left: ${barToX(153)}px"></div>${numbers}`;
    return `<svg class="lane-grid"><path class="beat" d="${beats}"/><path class="bar" d="${bars}"/></svg>`;
}

document.getElementById('trackList').innerHTML = tracks.map(renderTrack).join('');
document.getElementById('lanes').innerHTML = renderRuler() + tracks.map((track, i) =>
    `<div class="lane${i === 0 ? ' first' : ''}${track.selected ? ' selected' : ''}">${track.regions.map(renderRegion).join('')}</div>`).join('');
document.getElementById('dbScale').innerHTML = [6, 3, 0, 3, 6, 10].map(n => `<li>${n}</li>`).join('');
document.getElementById('strips').innerHTML = channels.map(renderStrip).join('');
document.getElementById('masterStrip').innerHTML = renderStrip(master);
```
